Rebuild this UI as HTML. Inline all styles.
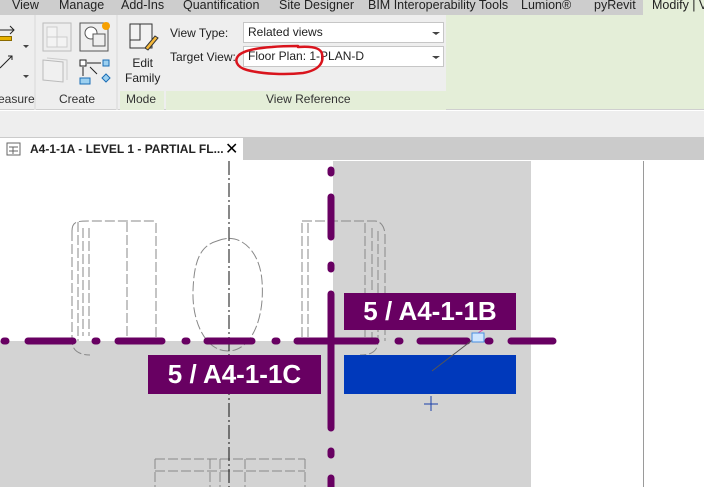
<!DOCTYPE html>
<html><head><style>
*{margin:0;padding:0;box-sizing:border-box}
body{width:704px;height:487px;overflow:hidden;position:relative;font-family:"Liberation Sans",sans-serif;background:#fff}
.a{position:absolute}
.t{font-size:12px;color:#222;white-space:nowrap}
.lbl{position:absolute;background:#680062;color:#fff;font-weight:bold;font-size:26px;line-height:37px;text-align:center}
</style></head><body>
<div class="a" style="left:0;top:0;width:704px;height:15px;background:#cdcdcd"></div>
<div class="a" style="left:643px;top:0;width:61px;height:16px;background:#e4eed8"></div>
<div class="a t" style="left:12px;top:-2px;font-size:12.5px">View</div>
<div class="a t" style="left:59px;top:-2px;font-size:12.5px">Manage</div>
<div class="a t" style="left:121px;top:-2px;font-size:12.5px">Add-Ins</div>
<div class="a t" style="left:183px;top:-2px;font-size:12.5px">Quantification</div>
<div class="a t" style="left:279px;top:-2px;font-size:12.5px">Site Designer</div>
<div class="a t" style="left:368px;top:-2px;font-size:12.5px">BIM Interoperability Tools</div>
<div class="a t" style="left:521px;top:-2px;font-size:12.5px">Lumion®</div>
<div class="a t" style="left:594px;top:-2px;font-size:12.5px">pyRevit</div>
<div class="a t" style="left:652px;top:-2px;font-size:12.5px">Modify | V</div>
<div class="a" style="left:0;top:15px;width:704px;height:95px;background:#eeeeee;border-bottom:1px solid #cfcfcf"></div>
<div class="a" style="left:446px;top:15px;width:258px;height:95px;background:#e4eed8;border-bottom:1px solid #cfcfcf"></div>
<div class="a" style="left:34px;top:15px;width:2px;height:95px;background:#e3e3e3"></div>
<div class="a" style="left:116px;top:15px;width:2px;height:95px;background:#e3e3e3"></div>
<div class="a" style="left:120px;top:91px;width:44px;height:19px;background:#e4eed8"></div>
<div class="a" style="left:166px;top:91px;width:280px;height:19px;background:#e4eed8"></div>
<div class="a t" style="left:-2px;top:92px;font-size:12px;color:#333">easure</div>
<div class="a t" style="left:59px;top:92px;font-size:12px;color:#333">Create</div>
<div class="a t" style="left:126px;top:92px;font-size:12px;color:#333">Mode</div>
<div class="a t" style="left:266px;top:92px;font-size:12px;color:#333">View Reference</div>
<div class="a t" style="left:125px;top:56px;line-height:15px;text-align:center;font-size:12px">Edit<br>Family</div>
<div class="a" style="left:-2px;top:36px;width:14px;height:5px;background:#e8b200;border:1px solid #8a6a00"></div>
<svg class="a" style="left:0;top:18px" width="170" height="72"><path d="M0 12H14M10 8L14 12 10 16" stroke="#222" fill="none"/><path d="M0 50L12 38M8 38H12V42" stroke="#222" fill="none"/><path d="M23 27l3 3 3-3z M23 57l3 3 3-3z" fill="#444"/>
<rect x="43" y="5" width="28" height="28" fill="none" stroke="#bbb"/><rect x="47" y="9" width="10" height="10" fill="#f3f3f3" stroke="#ccc"/><rect x="57" y="19" width="10" height="10" fill="#f3f3f3" stroke="#ccc"/><rect x="47" y="19" width="10" height="10" fill="#f3f3f3" stroke="#ccc"/>
<rect x="80" y="5" width="28" height="28" fill="none" stroke="#555"/><circle cx="91" cy="15" r="6" fill="#fff" stroke="#555"/><rect x="93" y="16" width="12" height="12" fill="#eee" stroke="#555"/><circle cx="106" cy="8" r="4" fill="#f6a000"/>
<path d="M43 42l20 2v20l-20-2z" fill="#f0f0f0" stroke="#bbb"/><path d="M47 40l20 2v20" fill="none" stroke="#ccc"/>
<rect x="80" y="42" width="6" height="6" fill="#fff" stroke="#222"/><rect x="103" y="42" width="6" height="6" fill="#9cd0f0" stroke="#1a6db5"/><path d="M87 45H101" stroke="#222"/><path d="M83 49V58M90 49L97 56" stroke="#222"/><rect x="80" y="60" width="10" height="6" fill="#9cd0f0" stroke="#1a6db5"/><path d="M102 60l4-4 4 4-4 4z" fill="#9cd0f0" stroke="#1a6db5"/>
<rect x="130" y="6" width="22" height="24" fill="#f2f2f2" stroke="#333"/><path d="M130 22H140V6" stroke="#333" fill="none"/><path d="M145 30l10-12 3 2-10 12z" fill="#f6b93b" stroke="#333"/></svg>
<div class="a t" style="left:170px;top:26px">View Type:</div>
<div class="a t" style="left:170px;top:50px">Target View:</div>
<div class="a" style="left:243px;top:22px;width:201px;height:21px;background:#fff;border:1px solid #c6c6c6"></div>
<div class="a" style="left:243px;top:46px;width:201px;height:21px;background:#fff;border:1px solid #c6c6c6"></div>
<div class="a t" style="left:248px;top:25px">Related views</div>
<div class="a t" style="left:248px;top:49px">Floor Plan: 1-PLAN-D</div>
<svg class="a" style="left:0;top:0" width="704" height="110"><path d="M432 32l4 3 4-3z M432 56l4 3 4-3z" fill="#444"/>
<path d="M298 47C312 46 321 48 322 54C324 62 320 70 303 73C285 75 262 74 247 70C236 67 234 60 239 55C245 50 258 48 272 47C282 46 292 46 298 46" stroke="#d9141d" stroke-width="2.5" fill="none" stroke-linecap="round"/></svg>
<div class="a" style="left:0;top:111px;width:704px;height:26px;background:#eeeeee"></div>
<div class="a" style="left:0;top:137px;width:704px;height:23px;background:#cbcbcb"></div>
<div class="a" style="left:0;top:138px;width:243px;height:22px;background:#fff"></div>
<svg class="a" style="left:6px;top:142px" width="16" height="14"><rect x="1" y="1" width="13" height="12" fill="none" stroke="#666"/><path d="M3 5H12M3 9H12M7 5V12" stroke="#666"/></svg>
<div class="a t" style="left:30px;top:142px;font-weight:bold;font-size:12px">A4-1-1A - LEVEL 1 - PARTIAL FL...</div>
<div class="a" style="left:225px;top:139px;font-size:16px">✕</div>
<div class="a" style="left:0;top:161px;width:704px;height:326px;background:#fff"></div>
<div class="a" style="left:333px;top:161px;width:198px;height:326px;background:#d3d3d3"></div>
<div class="a" style="left:0;top:341px;width:333px;height:146px;background:#d3d3d3"></div>
<div class="a" style="left:643px;top:161px;width:1px;height:326px;background:#9a9a9a"></div>
<svg class="a" style="left:0;top:161px" width="560" height="326">
<g stroke="#888" fill="none" stroke-width="1" stroke-dasharray="10 3">
<path d="M78 61V180M83 67V175M89 67V175M127 61V180M156 62V180M72 70C72 60 78 60 90 60H156M72 70V180C72 190 80 194 90 194"/>
<path d="M302 62V180M308 62V180M365 62V180M372 67V180M378 70V180C378 190 372 194 360 194M302 60H375C380 60 385 65 385 75V180"/>
<path d="M217 80C240 70 260 90 262 120C265 160 250 190 228 190C205 190 192 160 193 130C194 100 200 85 217 80"/>
<path d="M155 298H305M155 310H305M155 298V326M210 298V326M220 298V326M245 298V326M305 298V326"/>
</g>
<path d="M229 0V326" stroke="#111" stroke-dasharray="14 3 2 3"/>
<g stroke="#680062" stroke-width="7" stroke-linecap="round">
<path d="M4 180H6M28 180H73M95 180H97M118 180H162M185 180H187M207 180H252M275 180H277M297 180H376M398 180H400M420 180H467M488 180H490M511 180H553"/>
<path d="M331 9V12M331 36V76M331 104V108M331 133V267M331 290V294M331 317V326"/>
</g>
<rect x="344" y="194" width="172" height="39" fill="#0039bb"/>
<path d="M432 210L475 177" stroke="#555"/>
<path d="M478 172l6-4" stroke="#e040a0"/>
<rect x="472" y="172" width="12" height="9" fill="#cfe6ff" stroke="#4a8fe0"/>
<path d="M431 235V250M424 243H438" stroke="#1a3fa8"/>
</svg>
<div class="lbl" style="left:344px;top:293px;width:172px">5 / A4-1-1B</div>
<div class="lbl" style="left:148px;top:355px;width:173px;height:39px;line-height:39px">5 / A4-1-1C</div>
</body></html>
